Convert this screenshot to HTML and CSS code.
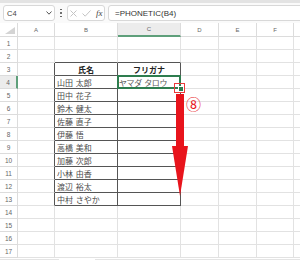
FILE: index.html
```html
<!DOCTYPE html>
<html lang="ja">
<head>
<meta charset="utf-8">
<title>PHONETIC</title>
<link rel="stylesheet" href="styles.css">
</head>
<body>
<div class="page">
  <div class="toolbar">
    <div class="namebox">
      <span class="ref">C4</span>
      <svg class="chev" width="6" height="4" viewBox="0 0 6 4"><polyline points="0.5,0.5 3,3.2 5.5,0.5" fill="none" stroke="#555" stroke-width="1"/></svg>
    </div>
    <div class="dots"><i></i><i></i><i></i></div>
    <div class="fbtns">
      <svg class="xicon" width="7" height="7" viewBox="0 0 7 7"><path d="M0.5 0.5L6.5 6.5M6.5 0.5L0.5 6.5" stroke="#c4c4c4" stroke-width="1" fill="none"/></svg>
      <svg class="okicon" width="9" height="7" viewBox="0 0 9 7"><polyline points="0.5,3.5 3.2,6.2 8.5,0.5" fill="none" stroke="#c4c4c4" stroke-width="1"/></svg>
      <span class="fx">fx</span>
    </div>
    <div class="formula">=PHONETIC(B4)</div>
  </div>

  <div class="sheet">
    <div class="c ch corner"><svg width="10" height="7" viewBox="0 0 10 7"><polygon points="10,0 10,7 0,7" fill="#d4d4d4"/></svg></div>
    <div class="c ch">A</div><div class="c ch">B</div><div class="c ch csel">C</div><div class="c ch">D</div><div class="c ch">E</div><div class="c ch">F</div><div class="c ch last"></div>

    <div class="c rh">1</div><div class="c"></div><div class="c"></div><div class="c"></div><div class="c"></div><div class="c"></div><div class="c"></div><div class="c last"></div>
    <div class="c rh">2</div><div class="c"></div><div class="c tb"></div><div class="c tb"></div><div class="c"></div><div class="c"></div><div class="c"></div><div class="c last"></div>
    <div class="c rh">3</div><div class="c tr"></div><div class="c tc hd">氏名</div><div class="c tc hd">フリガナ</div><div class="c"></div><div class="c"></div><div class="c"></div><div class="c last"></div>
    <div class="c rh rsel">4</div><div class="c tr"></div><div class="c tc nm">山田 太郎</div><div class="c tc nm sel"><span class="kana">ヤマダ タロウ</span><i class="fh"></i></div><div class="c"></div><div class="c"></div><div class="c"></div><div class="c last"></div>
    <div class="c rh">5</div><div class="c tr"></div><div class="c tc nm">田中 花子</div><div class="c tc"></div><div class="c"></div><div class="c"></div><div class="c"></div><div class="c last"></div>
    <div class="c rh">6</div><div class="c tr"></div><div class="c tc nm">鈴木 健太</div><div class="c tc"></div><div class="c"></div><div class="c"></div><div class="c"></div><div class="c last"></div>
    <div class="c rh">7</div><div class="c tr"></div><div class="c tc nm">佐藤 直子</div><div class="c tc"></div><div class="c"></div><div class="c"></div><div class="c"></div><div class="c last"></div>
    <div class="c rh">8</div><div class="c tr"></div><div class="c tc nm">伊藤 悟</div><div class="c tc"></div><div class="c"></div><div class="c"></div><div class="c"></div><div class="c last"></div>
    <div class="c rh">9</div><div class="c tr"></div><div class="c tc nm">高橋 美和</div><div class="c tc"></div><div class="c"></div><div class="c"></div><div class="c"></div><div class="c last"></div>
    <div class="c rh">10</div><div class="c tr"></div><div class="c tc nm">加藤 次郎</div><div class="c tc"></div><div class="c"></div><div class="c"></div><div class="c"></div><div class="c last"></div>
    <div class="c rh">11</div><div class="c tr"></div><div class="c tc nm">小林 由香</div><div class="c tc"></div><div class="c"></div><div class="c"></div><div class="c"></div><div class="c last"></div>
    <div class="c rh">12</div><div class="c tr"></div><div class="c tc nm">渡辺 裕太</div><div class="c tc"></div><div class="c"></div><div class="c"></div><div class="c"></div><div class="c last"></div>
    <div class="c rh">13</div><div class="c tr"></div><div class="c tc nm">中村 さやか</div><div class="c tc"></div><div class="c"></div><div class="c"></div><div class="c"></div><div class="c last"></div>
    <div class="c rh">14</div><div class="c"></div><div class="c"></div><div class="c"></div><div class="c"></div><div class="c"></div><div class="c"></div><div class="c last"></div>
    <div class="c rh">15</div><div class="c"></div><div class="c"></div><div class="c"></div><div class="c"></div><div class="c"></div><div class="c"></div><div class="c last"></div>
    <div class="c rh">16</div><div class="c"></div><div class="c"></div><div class="c"></div><div class="c"></div><div class="c"></div><div class="c"></div><div class="c last"></div>
    <div class="c rh">17</div><div class="c"></div><div class="c"></div><div class="c"></div><div class="c"></div><div class="c"></div><div class="c"></div><div class="c last"></div>
  </div>

  <div class="hscroll"><div class="thumb"></div></div>

  <div class="redbox"></div>
  <svg class="arrow" width="20" height="104" viewBox="0 0 20 104">
    <rect x="6" y="0" width="8" height="53" fill="#e8141c"/>
    <polygon points="2,52 18,52 10,102" fill="#e8141c"/>
  </svg>
  <span class="step">⑧</span>
</div>
</body>
</html>
```

FILE: styles.css
```css
html, body {
  margin: 0;
  padding: 0;
  background: #ffffff;
}

.page {
  position: relative;
  width: 300px;
  height: 260px;
  overflow: hidden;
  font-family: "Liberation Sans", Arial, sans-serif;
}

/* ---------- formula bar ---------- */
.toolbar {
  box-sizing: border-box;
  height: 23px;
  border-top: 3px solid #e3e3e3;
  background: #fafafa;
  display: flex;
  align-items: flex-start;
  padding: 2px 0 0 3px;
}

.namebox,
.fbtns,
.formula {
  box-sizing: border-box;
  height: 16px;
  background: #ffffff;
  border: 1px solid #d8d8d8;
  border-radius: 3px;
  display: flex;
  align-items: center;
}

.namebox {
  width: 52px;
  padding-left: 3px;
}

.ref {
  font-size: 7.5px;
  color: #444;
}

.chev {
  margin-left: auto;
  margin-right: 2px;
}

.dots {
  width: 12px;
  height: 16px;
  display: flex;
  flex-direction: column;
  align-items: center;
  justify-content: center;
  gap: 2px;
}

.dots i {
  display: block;
  width: 1.5px;
  height: 1.5px;
  border-radius: 50%;
  background: #555;
}

.fbtns {
  width: 38px;
  padding-left: 2px;
}

.okicon {
  margin-left: 5px;
}

.fx {
  margin-left: 5px;
  font-family: "Liberation Serif", "Times New Roman", serif;
  font-style: italic;
  font-size: 9px;
  color: #444;
}

.formula {
  flex: 1;
  margin-left: 3px;
  margin-right: -6px;
  padding-left: 6px;
  font-size: 8px;
  color: #333;
}

/* ---------- sheet grid ---------- */
.sheet {
  display: grid;
  grid-template-columns: 18px 37px 63px 63px 38px 38px 37px 6px;
  grid-template-rows: 14px repeat(17, 13px);
}

.c {
  box-sizing: border-box;
  border-right: 1px solid #e2e2e2;
  border-bottom: 1px solid #e2e2e2;
  display: flex;
  align-items: center;
  white-space: nowrap;
  font-family: "Noto Sans CJK JP", "Noto Sans CJK SC", sans-serif;
  font-size: 8px;
  color: #333;
}

.c.last {
  border-right: none;
}

.ch {
  justify-content: center;
  font-family: "Liberation Sans", Arial, sans-serif;
  font-size: 6px;
  color: #666;
  border-color: #dcdcdc;
}

.corner {
  justify-content: flex-end;
  align-items: flex-end;
  padding: 0 2px 2px 0;
}

.csel {
  background: #ececec;
  border-bottom: 2px solid #5e9f7a;
}

.rh {
  justify-content: center;
  font-family: "Liberation Sans", Arial, sans-serif;
  font-size: 6.5px;
  color: #666;
  border-color: #dcdcdc;
}

.rsel {
  background: #ececec;
  border-right: 2px solid #5e9f7a;
}

/* table borders B3:C13 */
.tb {
  border-bottom-color: #555;
}

.tr {
  border-right-color: #555;
}

.tc {
  border-right-color: #555;
  border-bottom-color: #555;
}

.hd {
  justify-content: center;
  font-weight: 700;
  color: #222;
}

.nm {
  padding-left: 2px;
  word-spacing: 1px;
  color: #4a4a4a;
}

.sel {
  position: relative;
  padding-left: 1px;
}

.sel::after {
  content: "";
  position: absolute;
  left: -1px;
  top: -1px;
  right: -1px;
  bottom: -1px;
  border: 2px solid #2e7d4f;
  pointer-events: none;
}

.kana {
  color: #5a5a5a;
  letter-spacing: -0.4px;
  word-spacing: 1px;
}

.fh {
  position: absolute;
  left: 60px;
  top: 10px;
  width: 4px;
  height: 4px;
  background: #2e7d4f;
  border: 1px solid #ffffff;
  z-index: 2;
}

/* ---------- bottom strip ---------- */
.hscroll {
  height: 2px;
  margin-top: 1px;
  background: #e4e4e4;
  position: relative;
}

.thumb {
  margin-left: 59px;
  width: 36px;
  height: 2px;
  background: #ffffff;
}

/* ---------- annotations ---------- */
.redbox {
  position: absolute;
  left: 174px;
  top: 83px;
  width: 11px;
  height: 10px;
  box-sizing: border-box;
  border: 1.5px solid #ea3a3a;
  z-index: 3;
}

.arrow {
  position: absolute;
  left: 170px;
  top: 94px;
  z-index: 3;
}

.step {
  position: absolute;
  left: 186px;
  top: 96px;
  font-family: "Noto Sans CJK JP", "Noto Sans CJK SC", sans-serif;
  font-size: 15px;
  line-height: 1;
  color: #e8141c;
  z-index: 3;
}
```
